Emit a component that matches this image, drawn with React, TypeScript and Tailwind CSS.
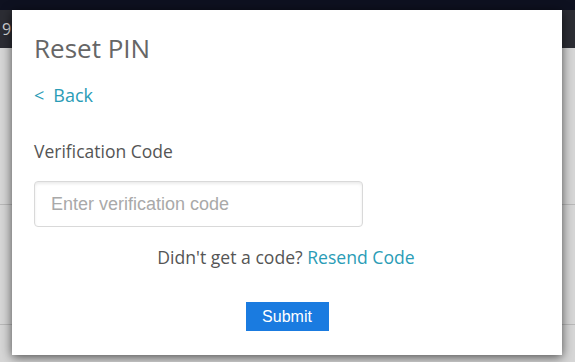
import React from "react";

export default function App() {
  return (
    <div className="relative w-[575px] h-[362px] overflow-hidden bg-[#d6d6d6]" style={{ fontFamily: '"Open Sans", sans-serif' }}>
      {/* background page */}
      <div className="h-[10px] bg-[#0e1120]" />
      <div className="h-[38px] bg-[#2c2d34] flex items-center px-[2px]">
        <span className="text-[16px] text-[#d8d8d8] leading-none">9</span>
      </div>
      <div className="h-[157px] border-b border-[#b8b8b8]" />
      <div className="h-[120px] border-b border-[#b8b8b8]" />

      {/* modal */}
      <div className="absolute left-[12px] top-[10px] w-[550px] h-[345px] bg-white shadow-[0_2px_10px_rgba(0,0,0,0.65)] px-[22px] pt-[22px]">
        <h1 className="text-[26px] leading-[32px] text-[#666666] font-normal">Reset PIN</h1>
        <div className="mt-[19px] text-[18px] leading-[24px] text-[#2a9cb6]">
          <span>&lt;</span>
          <span className="ml-[9px]">Back</span>
        </div>
        <div className="mt-[32px] text-[17.5px] leading-[24px] text-[#555555]">Verification Code</div>
        <input
          className="mt-[18px] w-[329px] h-[46px] rounded-[4px] border border-[#d9d9d9] shadow-[inset_0_2px_3px_rgba(0,0,0,0.08)] px-[16px] text-[18px] text-[#555] placeholder:text-[#a9a9a9] outline-none"
          style={{ fontFamily: '"Liberation Sans", Arial, sans-serif' }}
          placeholder="Enter verification code"
        />
        <div className="mt-[18px] text-center text-[17.6px] leading-[24px] text-[#555555] pr-[2px]">
          Didn't get a code? <span className="text-[#2a9cb6]">Resend Code</span>
        </div>
        <div className="mt-[33px] flex justify-center">
          <button
            className="w-[83px] h-[29px] bg-[#1a7be0] text-white text-[16px] leading-none"
            style={{ fontFamily: '"Liberation Sans", Arial, sans-serif' }}
          >
            Submit
          </button>
        </div>
      </div>
    </div>
  );
}
